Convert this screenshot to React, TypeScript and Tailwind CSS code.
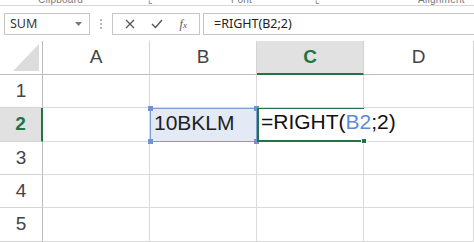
import React from "react";

const font = { fontFamily: '"Liberation Sans", Arial, sans-serif' };

function Corner() {
  return (
    <div className="border-r border-b border-[#bcbcbc] flex items-end justify-end pr-[3px] pb-[3px]">
      <svg width="26" height="27" viewBox="0 0 26 27">
        <polygon points="26,0 26,27 0,27" fill="#dcdcdc" />
      </svg>
    </div>
  );
}

function ColHead({ label, active }: { label: string; active?: boolean }) {
  return active ? (
    <div className="bg-[#e1e1e1] border-r border-[#d4d4d4] border-b-2 border-b-[#217346] flex items-center justify-center text-[19px] font-bold text-[#217346]">
      {label}
    </div>
  ) : (
    <div className="border-r border-b border-[#d4d4d4] border-b-[#bcbcbc] flex items-center justify-center text-[19px] text-[#444]">
      {label}
    </div>
  );
}

function RowHead({ n, active }: { n: number; active?: boolean }) {
  return active ? (
    <div className="bg-[#e1e1e1] border-b border-[#d4d4d4] border-r-2 border-r-[#217346] flex items-center justify-center text-[19px] font-bold text-[#217346]">
      {n}
    </div>
  ) : (
    <div className="border-b border-[#d4d4d4] border-r border-r-[#bcbcbc] flex items-center justify-center text-[19px] text-[#444]">
      {n}
    </div>
  );
}

function Cell() {
  return <div className="border-r border-b border-[#dadada]" />;
}

export default function App() {
  return (
    <div className="w-[474px] h-[242px] overflow-hidden bg-white flex flex-col" style={font}>
      {/* ribbon group labels, cut off at top */}
      <div className="h-[6px] overflow-hidden border-b border-[#d6d6d6] flex text-[10px] text-[#777] leading-none">
        <span className="-mt-[5px] ml-[38px] tracking-wide">Clipboard</span>
        <span className="-mt-[5px] ml-[65px]">⌞</span>
        <span className="-mt-[5px] ml-[78px] tracking-wide">Font</span>
        <span className="-mt-[5px] ml-[63px]">⌞</span>
        <span className="-mt-[5px] ml-[98px] tracking-wide">Alignment</span>
      </div>

      {/* formula bar */}
      <div className="mt-[7px] h-[22px] flex items-stretch" style={{ fontFamily: '"Noto Sans", "Open Sans", sans-serif' }}>
        <div className="ml-[4px] w-[86px] border border-[#c6c6c6] flex items-center justify-between pl-[5px] pr-[7px] text-[12.5px] text-[#333]">
          <span>SUM</span>
          <svg width="7" height="4" viewBox="0 0 7 4">
            <polygon points="0,0 7,0 3.5,4" fill="#777" />
          </svg>
        </div>
        <div className="w-[22px] flex flex-col items-center justify-center gap-[2px]">
          <span className="w-[2px] h-[2px] bg-[#b8b8b8]" />
          <span className="w-[2px] h-[2px] bg-[#b8b8b8]" />
          <span className="w-[2px] h-[2px] bg-[#b8b8b8]" />
        </div>
        <div className="w-[88px] border border-[#c6c6c6] flex items-center justify-around px-[4px]">
          <svg width="10" height="10" viewBox="0 0 10 10">
            <path d="M1 1 L9 9 M9 1 L1 9" stroke="#555" strokeWidth="1.3" />
          </svg>
          <svg width="12" height="10" viewBox="0 0 12 10">
            <path d="M1 5 L4.5 8.5 L11 1" stroke="#555" strokeWidth="1.4" fill="none" />
          </svg>
          <span className="italic text-[12px] text-[#555]" style={{ fontFamily: '"Liberation Serif", serif' }}>
            f<span className="text-[9px]">x</span>
          </span>
        </div>
        <div className="ml-[3px] flex-1 border-t border-b border-l border-[#c6c6c6] flex items-center pl-[10px] text-[12.5px] text-[#222]">
          =RIGHT(B2;2)
        </div>
      </div>

      {/* sheet grid */}
      <div
        className="mt-[6px] grid grid-cols-[43px_107px_107px_107px_1fr] grid-rows-[34px_33px_34px_33px_33px_34px]"
      >
        <Corner />
        <ColHead label="A" />
        <ColHead label="B" />
        <ColHead label="C" active />
        <ColHead label="D" />

        <RowHead n={1} />
        <Cell />
        <Cell />
        <Cell />
        <Cell />

        <RowHead n={2} active />
        <Cell />
        <div className="relative bg-[#e3eaf6] border border-[#7e9ed4] flex items-end pl-[3px] pb-[3px] text-[21px] text-[#222]">
          <span>10BKLM</span>
          <span className="absolute -left-[3px] -top-[3px] w-[5px] h-[5px] bg-[#7393cc]" />
          <span className="absolute -right-[3px] -top-[3px] w-[5px] h-[5px] bg-[#7393cc]" />
          <span className="absolute -left-[3px] -bottom-[3px] w-[5px] h-[5px] bg-[#7393cc]" />
          <span className="absolute -right-[3px] -bottom-[3px] w-[5px] h-[5px] bg-[#7393cc]" />
        </div>
        <div className="relative z-10 border-l-2 border-t border-b-2 border-[#217346] flex items-end pl-[2px] pb-[3px] text-[21px] text-[#111] whitespace-nowrap overflow-visible">
          <span>
            =RIGHT(<span className="text-[#5b8bd6]">B2</span>;2)
          </span>
          <span className="absolute -right-[3px] -bottom-[4px] w-[6px] h-[6px] bg-[#217346] border border-white" />
        </div>
        <div className="border-r border-b border-[#dadada]" />

        <RowHead n={3} />
        <Cell />
        <Cell />
        <Cell />
        <Cell />

        <RowHead n={4} />
        <Cell />
        <Cell />
        <Cell />
        <Cell />

        <RowHead n={5} />
        <Cell />
        <Cell />
        <Cell />
        <Cell />
      </div>
    </div>
  );
}
